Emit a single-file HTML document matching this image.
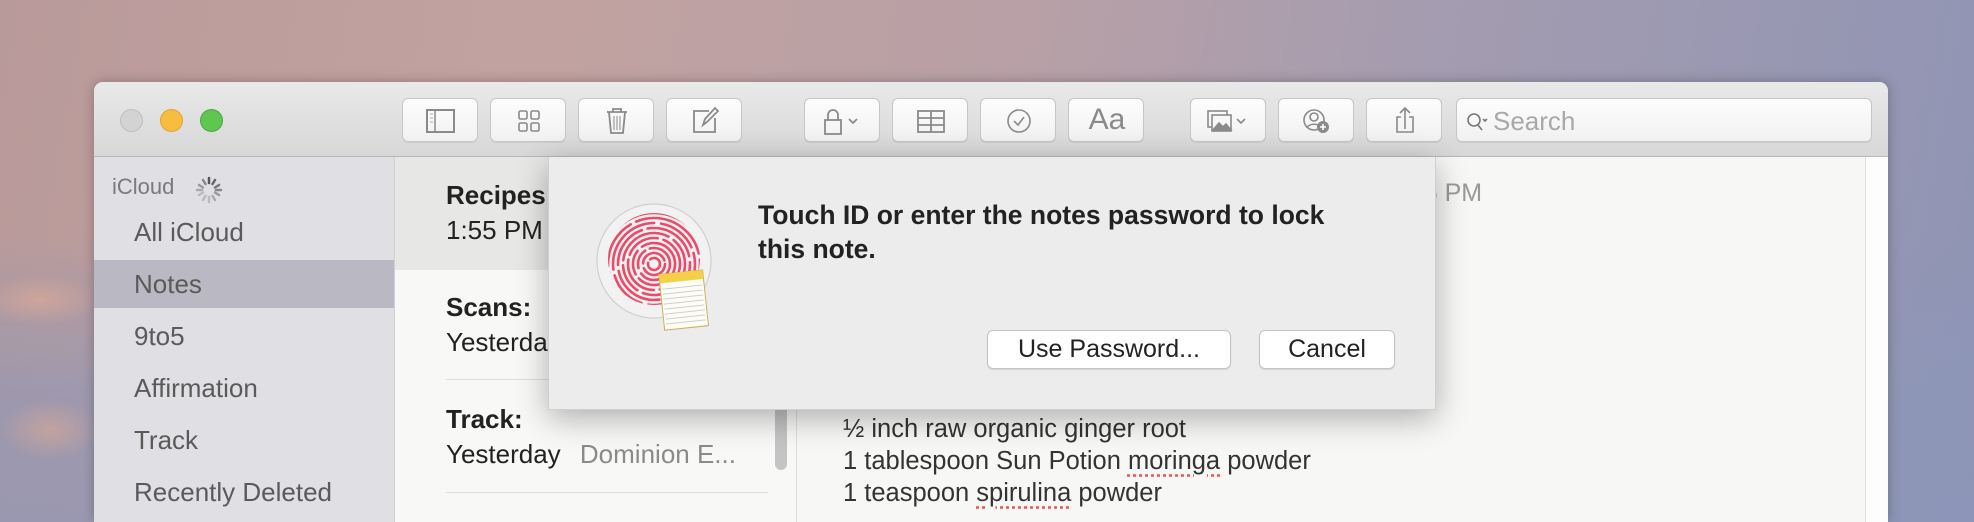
<!DOCTYPE html>
<html style="overflow:hidden;width:1974px;height:522px"><head><meta charset="utf-8"><style>
*{margin:0;padding:0;box-sizing:border-box}
body{width:1974px;height:522px;overflow:hidden;position:relative;font-family:"Liberation Sans",sans-serif;
background:
radial-gradient(ellipse 60px 25px at 40px 300px,rgba(220,170,150,.7),transparent),
radial-gradient(ellipse 50px 30px at 50px 430px,rgba(220,170,150,.6),transparent),
linear-gradient(180deg,rgba(0,0,0,0) 0%,rgba(0,0,0,0) 45%,rgba(140,150,185,.6) 75%,rgba(140,150,185,.7) 100%),
linear-gradient(100deg,#b99a9a 0%,#c2a2a0 25%,#b8a0a6 50%,#a49cb0 70%,#8f94b4 100%)}
.abs{position:absolute}
.win{left:94px;top:82px;width:1794px;height:440px;border-radius:9px 9px 0 0;overflow:hidden;background:#f7f7f5;box-shadow:0 0 12px rgba(0,0,0,.25)}
.tb{left:0;top:0;width:1794px;height:75px;background:linear-gradient(#e9e9e9,#d7d7d7);border-bottom:1px solid #b8b8b8}
.tl{width:23px;height:23px;border-radius:50%;top:27px}
.btn{top:16px;width:76px;height:44px;background:linear-gradient(#fdfdfd,#f1f1f1);border:1px solid #c6c6c6;border-radius:6px;box-shadow:0 1px 0 rgba(0,0,0,.06)}
.btn svg{position:absolute;left:0;top:0}
.sb{left:0;top:75px;width:301px;height:365px;background:#e0dfe3;border-right:1px solid #d0d0d0}
.si{left:40px;font-size:26px;color:#5a5a5a;line-height:30px}
.list{left:301px;top:75px;width:402px;height:365px;background:#f8f8f6}
.nt{font-size:26px;color:#222;line-height:30px;left:51px}
.note{font-size:25.5px;color:#333;line-height:30px;left:749px}
.dlg{left:548px;top:157px;width:888px;height:253px;background:#ececec;box-shadow:0 8px 30px rgba(0,0,0,.3);border:1px solid #d0d0d0;border-top:none}
.db{top:173px;height:39px;background:#fff;border:1px solid #c4c4c4;border-radius:6px;font-size:25px;color:#222;text-align:center;line-height:37px;box-shadow:0 1px 1px rgba(0,0,0,.1)}
</style></head><body>

<div class="abs win">
 <div class="abs tb">
  <div class="abs tl" style="left:26px;background:#d3d3d3;border:1px solid #bdbdbd"></div>
  <div class="abs tl" style="left:66px;background:#f7bd3e;border:1px solid #dea236"></div>
  <div class="abs tl" style="left:106px;background:#5fc650;border:1px solid #4aa83e"></div>

  <div class="abs btn" style="left:308px"><svg width="76" height="44"><rect x="24" y="11" width="27" height="22" fill="none" stroke="#8a8a8a" stroke-width="2"/><line x1="32" y1="11" x2="32" y2="33" stroke="#8a8a8a" stroke-width="1.5"/><path d="M27 15h3M27 19h3M27 23h3" stroke="#aaa"/></svg></div>
  <div class="abs btn" style="left:396px"><svg width="76" height="44"><g fill="none" stroke="#8a8a8a" stroke-width="1.6"><rect x="28" y="12" width="8" height="8" rx="1.5"/><rect x="40" y="12" width="8" height="8" rx="1.5"/><rect x="28" y="24" width="8" height="8" rx="1.5"/><rect x="40" y="24" width="8" height="8" rx="1.5"/></g></svg></div>
  <div class="abs btn" style="left:484px"><svg width="76" height="44"><g fill="none" stroke="#8a8a8a" stroke-width="1.8"><path d="M28 13h20M34 13v-3h8v3M30 13l2 21h12l2-21"/><path d="M35 17v14M38 17v14M41 17v14" stroke-width="1"/></g></svg></div>
  <div class="abs btn" style="left:572px"><svg width="76" height="44"><g fill="none" stroke="#8a8a8a" stroke-width="1.8"><path d="M42 12H27v21h21V19"/><path d="M36 26l2-6 10-11 3 3-11 11z"/></g></svg></div>

  <div class="abs btn" style="left:710px"><svg width="76" height="44"><g fill="none" stroke="#8a8a8a" stroke-width="1.8"><rect x="20" y="21" width="16" height="14"/><path d="M23 21v-5a5 5 0 0 1 10 0v5"/><path d="M44 20l4 4 4-4"/></g></svg></div>
  <div class="abs btn" style="left:798px"><svg width="76" height="44"><g fill="none" stroke="#8a8a8a" stroke-width="1.8"><rect x="25" y="12" width="26" height="21"/><path d="M25 19h26M25 26h26M38 12v21"/></g></svg></div>
  <div class="abs btn" style="left:886px"><svg width="76" height="44"><g fill="none" stroke="#8a8a8a" stroke-width="1.6"><circle cx="38" cy="22" r="11"/><path d="M33 22l4 4 6-8"/></g></svg></div>
  <div class="abs btn" style="left:974px"><div class="abs" style="left:0;width:76px;top:4px;text-align:center;font-size:30px;color:#8a8a8a">Aa</div></div>

  <div class="abs btn" style="left:1096px"><svg width="76" height="44"><g fill="none" stroke="#8a8a8a" stroke-width="1.6"><rect x="17" y="12" width="19" height="16"/><rect x="21" y="16" width="19" height="16" fill="#f6f6f6"/><path d="M22 31l6-7 4 4 3-3 5 6z" fill="#8a8a8a"/><path d="M46 20l4 4 4-4"/></g></svg></div>
  <div class="abs btn" style="left:1184px"><svg width="76" height="44"><g fill="none" stroke="#8a8a8a" stroke-width="1.6"><circle cx="35" cy="21" r="10"/><circle cx="35" cy="18" r="4"/><path d="M28 29c2-5 12-5 14 0"/></g><circle cx="44" cy="28" r="6" fill="#8a8a8a"/><path d="M44 25v6M41 28h6" stroke="#fff" stroke-width="1.6"/></svg></div>
  <div class="abs btn" style="left:1272px"><svg width="76" height="44"><g fill="none" stroke="#8a8a8a" stroke-width="1.6"><path d="M38 30V9M33 14l5-5 5 5M34 18h-4v15h16V18h-4"/></g></svg></div>
  <div class="abs btn" style="left:1362px;width:416px"><svg width="40" height="44"><g fill="none" stroke="#777" stroke-width="1.6"><circle cx="17" cy="21" r="6"/><path d="M21 26l4 5M26 20l2 2 2-2"/></g></svg><div class="abs" style="left:36px;top:7px;font-size:26px;color:#a8a8a8">Search</div></div>
 </div>

 <div class="abs sb">
  <div class="abs" style="left:0;top:103px;width:300px;height:48px;background:#b9b8c3"></div>
  <div class="abs" style="left:18px;top:17px;font-size:22px;color:#7a7a7a">iCloud</div>
  <svg class="abs" style="left:100px;top:18px" width="30" height="30"><g stroke-width="2.5" stroke-linecap="round"><line x1="15" y1="3" x2="15" y2="8" stroke="#555"/><line x1="21" y1="5" x2="18.5" y2="9" stroke="#666"/><line x1="25" y1="10" x2="21" y2="12.5" stroke="#777"/><line x1="27" y1="15" x2="22" y2="15" stroke="#888"/><line x1="25" y1="20" x2="21" y2="17.5" stroke="#999"/><line x1="21" y1="25" x2="18.5" y2="21" stroke="#aaa"/><line x1="15" y1="27" x2="15" y2="22" stroke="#bbb"/><line x1="9" y1="25" x2="11.5" y2="21" stroke="#bbb"/><line x1="5" y1="20" x2="9" y2="17.5" stroke="#bbb"/><line x1="3" y1="15" x2="8" y2="15" stroke="#aaa"/><line x1="5" y1="10" x2="9" y2="12.5" stroke="#999"/><line x1="9" y1="5" x2="11.5" y2="9" stroke="#888"/></g></svg>
  <div class="abs si" style="top:60px">All iCloud</div>
  <div class="abs si" style="top:112px">Notes</div>
  <div class="abs si" style="top:164px">9to5</div>
  <div class="abs si" style="top:216px">Affirmation</div>
  <div class="abs si" style="top:268px">Track</div>
  <div class="abs si" style="top:320px">Recently Deleted</div>
 </div>

 <div class="abs list">
  <div class="abs" style="left:0;top:0;width:402px;height:113px;background:#e7e7e5"></div>
  <div class="abs nt" style="top:23px;font-weight:bold">Recipes</div>
  <div class="abs nt" style="top:58px">1:55 PM</div>
  <div class="abs nt" style="top:135px;font-weight:bold">Scans:</div>
  <div class="abs nt" style="top:170px">Yesterday</div>
  <div class="abs" style="left:51px;top:222px;width:322px;height:1px;background:#ddd"></div>
  <div class="abs nt" style="top:247px;font-weight:bold">Track:</div>
  <div class="abs nt" style="top:282px">Yesterday <span style="color:#8a8a8a;margin-left:12px">Dominion E...</span></div>
  <div class="abs" style="left:51px;top:335px;width:322px;height:1px;background:#ddd"></div>
  <div class="abs" style="left:380px;top:220px;width:12px;height:93px;border-radius:6px;background:#c4c4c4"></div>
  <div class="abs" style="left:401px;top:0;width:1px;height:365px;background:#ddd"></div>
 </div>

 <div class="abs" style="left:1295px;top:97px;font-size:25px;color:#999">1:55 PM</div>
 <div class="abs note" style="top:332px">½ inch raw organic ginger root</div>
 <div class="abs note" style="top:364px">1 tablespoon Sun Potion <span style="text-decoration:underline dotted #e55;text-underline-offset:5px">moringa</span> powder</div>
 <div class="abs note" style="top:396px">1 teaspoon <span style="text-decoration:underline dotted #e55;text-underline-offset:5px">spirulina</span> powder</div>
 <div class="abs" style="left:1771px;top:75px;width:1px;height:365px;background:#e2e2e2"></div>
 <div class="abs" style="left:1772px;top:75px;width:22px;height:365px;background:#fdfdfd"></div>
</div>

<div class="abs dlg">
 <svg class="abs" style="left:45px;top:45px" width="130" height="130">
  <defs><clipPath id="c"><circle cx="60" cy="57" r="46"/></clipPath></defs>
  <circle cx="60" cy="59" r="57" fill="#f2f2f2" stroke="#cfcfcf" stroke-width="1.2"/>
  <g clip-path="url(#c)" fill="none" stroke="#ec4a68" stroke-width="2.6" stroke-linecap="round">
   <circle cx="60" cy="62" r="6" stroke-dasharray="20 4"/>
   <circle cx="60" cy="62" r="11" stroke-dasharray="30 5"/>
   <circle cx="60" cy="62" r="16" stroke-dasharray="40 6 20 5"/>
   <circle cx="60" cy="62" r="21" stroke-dasharray="50 5 25 6"/>
   <circle cx="60" cy="62" r="26" stroke-dasharray="35 6 45 5"/>
   <circle cx="60" cy="62" r="31" stroke-dasharray="60 6 30 5"/>
   <circle cx="60" cy="62" r="36" stroke-dasharray="45 6 55 6"/>
   <circle cx="60" cy="62" r="41" stroke-dasharray="70 7 40 6"/>
   <circle cx="60" cy="62" r="46" stroke-dasharray="50 6 80 6"/>
   <circle cx="60" cy="62" r="51" stroke-dasharray="90 8"/>
  </g>
  <g transform="rotate(-6 90 92)">
   <rect x="67" y="70" width="44" height="56" fill="#fdfdf6" stroke="#c9b060" stroke-width="1"/>
   <rect x="67" y="70" width="44" height="9" fill="#f5cf4a"/>
   <g stroke="#cfcfcf" stroke-width="1"><path d="M69 85h40M69 90h40M69 95h40M69 100h40M69 105h40M69 110h40M69 115h40M69 120h40"/></g>
  </g>
 </svg>
 <div class="abs" style="left:209px;top:41px;font-size:26.5px;font-weight:bold;color:#222;line-height:34px">Touch ID or enter the notes password to lock<br>this note.</div>
 <div class="abs db" style="left:438px;width:244px">Use Password...</div>
 <div class="abs db" style="left:710px;width:136px">Cancel</div>
</div>
</body></html>
